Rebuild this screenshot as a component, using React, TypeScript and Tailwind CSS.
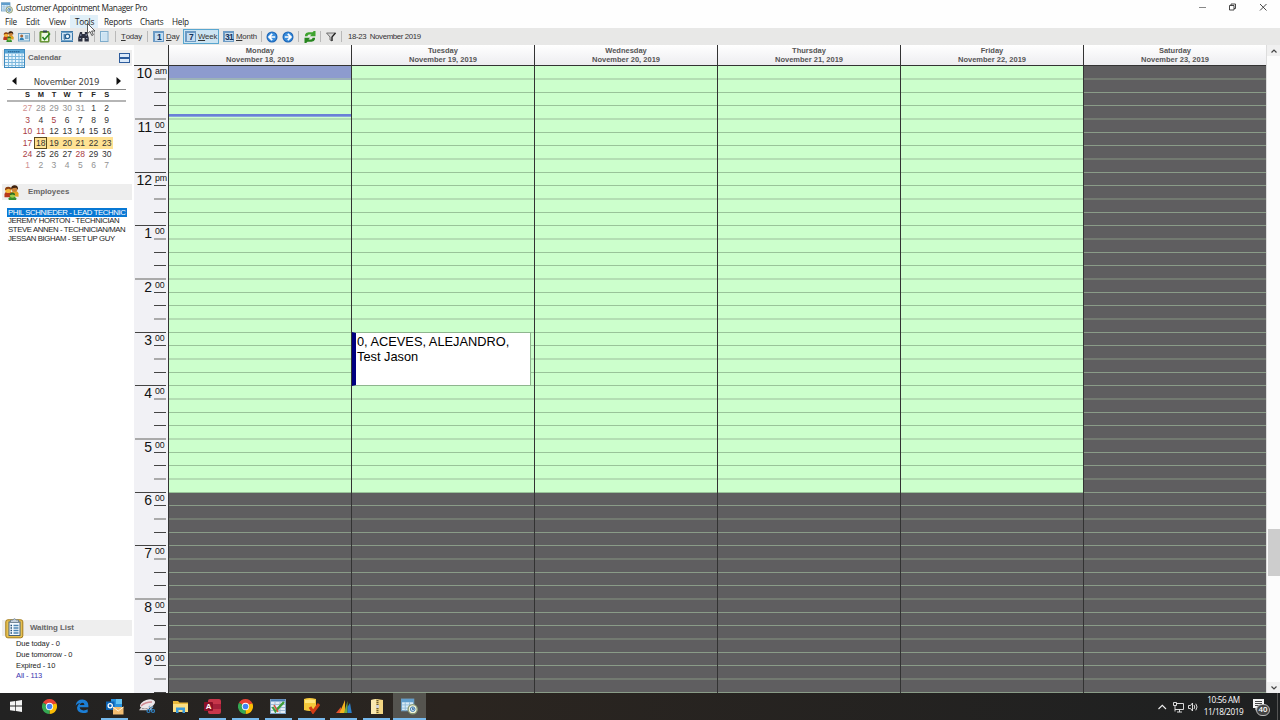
import type { ReactNode } from "react";
import clsx from "clsx";

const DAYS = [
  { name: "Monday", date: "November 18, 2019" },
  { name: "Tuesday", date: "November 19, 2019" },
  { name: "Wednesday", date: "November 20, 2019" },
  { name: "Thursday", date: "November 21, 2019" },
  { name: "Friday", date: "November 22, 2019" },
  { name: "Saturday", date: "November 23, 2019" },
];

const HOURS = [
  ["10", "am"], ["11", "00"], ["12", "pm"], ["1", "00"], ["2", "00"], ["3", "00"],
  ["4", "00"], ["5", "00"], ["6", "00"], ["7", "00"], ["8", "00"], ["9", "00"],
];

// 15 minute slots, 10 am to 9:45 pm
const SLOTS = Array.from({ length: 47 }, (_, i) => i);
const CLOSING_SLOT = 32;

const WEEKS = [
  [27, 28, 29, 30, 31, 1, 2],
  [3, 4, 5, 6, 7, 8, 9],
  [10, 11, 12, 13, 14, 15, 16],
  [17, 18, 19, 20, 21, 22, 23],
  [24, 25, 26, 27, 28, 29, 30],
  [1, 2, 3, 4, 5, 6, 7],
];

const EMPLOYEES = [
  "PHIL SCHNIEDER - LEAD TECHNIC",
  "JEREMY HORTON - TECHNICIAN",
  "STEVE ANNEN - TECHNICIAN/MAN",
  "JESSAN BIGHAM - SET UP GUY",
];

type CellProps = { className?: string; children?: ReactNode };

/* ---------- icons ---------- */

const AppIcon = ({ size = 12 }: { size?: number }) => (
  <svg width={size} height={size} viewBox="0 0 16 16">
    <rect x="0.5" y="1" width="11.500" height="11" fill="#d8ebf7" stroke="#6d9cc0" />
    <rect x="0.5" y="1" width="11.500" height="3" fill="#5f9dcc" />
    <path d="M1 6.500h10M1 9.500h10M4 4v8M8 4v8" stroke="#8ab6d6" strokeWidth="0.800" />
    <circle cx="11" cy="10.500" r="4.300" fill="#f5f6dc" stroke="#8b9a76" strokeWidth="1.300" />
    <circle cx="11" cy="10.500" r="2.200" fill="#d2e5f3" stroke="#3a79ae" strokeWidth="0.900" />
    <path d="M11 9v2l1.500-1" stroke="#1f568c" strokeWidth="0.900" fill="none" />
  </svg>
);

const PeopleIcon = ({ size = 12 }: { size?: number }) => (
  <svg width={size} height={size} viewBox="0 0 16 16">
    <path d="M7.500 12V8q1-2 4-2t4 3v3.500z" fill="#e0a223" />
    <circle cx="11.200" cy="4" r="3.300" fill="#c98238" />
    <path d="M7.500 4.500Q7.500 0.300 11.300 0.300T15 5l-2-2-3 .3z" fill="#3c2110" />
    <path d="M0.500 13V10q.5-3 4-3t4.500 3v3z" fill="#b8381b" />
    <circle cx="4.500" cy="5.300" r="3.300" fill="#f3b63a" />
    <path d="M1 5.500Q1 1.800 4.500 1.800T8 5L4.500 4z" fill="#8b3d12" />
    <path d="M5 16v-2q1-2 4-2t4 2v2z" fill="#37902e" />
    <circle cx="9" cy="11" r="2.700" fill="#9ccf4a" />
    <path d="M6.200 11q0-3 2.800-3t2.800 3L9 10z" fill="#2d6b22" />
  </svg>
);

const ContactIcon = () => (
  <svg width="12" height="10" viewBox="0 0 12 10">
    <rect x="0.500" y="1.500" width="11" height="7.500" fill="#d5e9f5" stroke="#6fa2c4" />
    <circle cx="3.700" cy="4" r="1.500" fill="#a9683c" />
    <path d="M1.500 8q0-2.500 2.200-2.500T6 8z" fill="#2f7fb5" />
    <path d="M7 4h3.500M7 6h3.500" stroke="#3e7ea8" />
  </svg>
);

const TaskIcon = () => (
  <svg width="12" height="13" viewBox="0 0 12 13">
    <rect x="1" y="1.500" width="9" height="10.500" rx="0.500" fill="#7fae3e" stroke="#55822c" />
    <rect x="2.500" y="3" width="6.500" height="8" fill="#eef7e4" />
    <rect x="4" y="0.500" width="4" height="2" fill="#345" />
    <path d="M3.500 7l2 2.500L11 3.500" stroke="#23811c" strokeWidth="1.600" fill="none" />
  </svg>
);

const LookupIcon = () => (
  <svg width="12" height="11" viewBox="0 0 12 11">
    <rect x="0.500" y="0.500" width="11" height="10" fill="#cfe3f3" stroke="#3d79ab" />
    <path d="M0 1.500h12M0 9.500h12" stroke="#6ea3ca" />
    <circle cx="6.500" cy="5.300" r="2.200" fill="#eff8ff" stroke="#245f92" strokeWidth="1.200" />
    <path d="M3.200 3v5M5 7l-1.500 1.700" stroke="#245f92" />
  </svg>
);

const BinocularsIcon = () => (
  <svg width="11" height="11" viewBox="0 0 11 11">
    <path d="M2 1h2.200v2h2.600V1H9l1.800 6v3.500H6.500V7h-2v3.500H0.200V7z" fill="#2c3040" />
    <path d="M1.500 7.500h1.500M8 7.500h1.500M2.800 3v2M8.200 3v2" stroke="#8793ab" />
  </svg>
);

const ListIcon = () => (
  <svg width="9" height="11" viewBox="0 0 9 11">
    <rect x="0.500" y="0.500" width="7.500" height="10" fill="#d7eaf7" stroke="#7eaccb" />
    <path d="M2 3h5M2 5h5M2 7h5M2 9h5" stroke="#bcd9eb" strokeWidth="0.800" />
  </svg>
);

const DayIcon = ({ label }: { label: string }) => (
  <span className="flex h-[11px] w-[11px] shrink-0 items-center justify-center border-t-2 border-r border-b border-l-2 border-[#6c9bc5] bg-[#c5dcf0] text-[8.500px] leading-none font-bold tracking-[-0.6px] text-[#12325c]">
    {label}
  </span>
);

const ArrowIcon = ({ flip = false }: { flip?: boolean }) => (
  <svg width="12" height="12" viewBox="0 0 12 12" className={clsx(flip && "rotate-180")}>
    <circle cx="6" cy="6" r="5.500" fill="#1c66b8" />
    <circle cx="6" cy="6" r="4.400" fill="#3c8fdd" />
    <path d="M9.200 6H3.500M6.200 2.800L3 6l3.200 3.200" stroke="#fff" strokeWidth="1.700" fill="none" />
  </svg>
);

const RefreshIcon = () => (
  <svg width="12" height="12" viewBox="0 0 12 12">
    <path d="M1 5.300V3.800Q1.500 1.500 4.500 1.200H8.500L9.800 0H11.500V5.300H6L7.500 3.600H5Q3.700 3.700 3.400 5.300z" fill="#3ea32f" />
    <path d="M11 6.700V8.200Q10.500 10.500 7.500 10.800H3.500L2.200 12H0.500V6.700H6L4.500 8.400H7Q8.300 8.300 8.600 6.700z" fill="#27861f" />
  </svg>
);

const FilterIcon = () => (
  <svg width="10" height="10" viewBox="0 0 10 10">
    <path d="M0.500 1h9L6 5v4L4 8V5z" fill="#d4d4d4" stroke="#555" strokeWidth="0.800" />
    <path d="M9.500 1L6 5v4" stroke="#222" strokeWidth="1.200" fill="none" />
  </svg>
);

const CalendarIcon = () => (
  <svg width="21" height="19" viewBox="0 0 21 19">
    <rect x="0.500" y="0.500" width="20" height="18" fill="#e8f5fd" stroke="#3e8bc0" />
    <rect x="1" y="1" width="19" height="3.500" fill="#57a5d6" />
    <path d="M4 2.800h12" stroke="#1e5686" strokeDasharray="1.500 0.500" />
    <path d="M1 7.500h19M1 10.500h19M1 13.500h19M1 16.500h19M4.500 5v13M8 5v13M11.500 5v13M15 5v13M18 5v13" stroke="#7db8dd" />
  </svg>
);

const ClipboardIcon = () => (
  <svg width="19" height="21" viewBox="0 0 19 21">
    <rect x="0.800" y="1.800" width="17" height="18" rx="2" fill="#e6c050" stroke="#a37916" />
    <rect x="4" y="4" width="11" height="13.500" fill="#f4faff" stroke="#48627b" />
    <path d="M5.500 4.500V2h2Q9.500-.5 11.500 2h2v2.500z" fill="#c3cfdb" stroke="#66788a" strokeWidth="0.800" />
    <path d="M5.500 7.500h1.500M5.500 10h1.500M5.500 12.500h1.500M5.500 15h1.500" stroke="#1f4d78" strokeWidth="1.300" />
    <path d="M8.500 7.500h5M8.500 10h5M8.500 12.500h5M8.500 15h5" stroke="#4b84b2" strokeWidth="1.300" />
  </svg>
);

const ChromeIcon = () => (
  <svg width="15" height="15" viewBox="0 0 16 16">
    <path d="M8 8L1.070 4A8 8 0 0 1 14.930 4z" fill="#e94335" />
    <path d="M8 8L14.930 4A8 8 0 0 1 8 16z" fill="#fbbd05" />
    <path d="M8 8V16A8 8 0 0 1 1.070 4z" fill="#35a853" />
    <path d="M8 4h6.900l.5 1H8z" fill="#e94335" />
    <circle cx="8" cy="8" r="3.900" fill="#fff" />
    <circle cx="8" cy="8" r="3" fill="#4285f4" />
  </svg>
);

const EdgeIcon = () => (
  <svg width="14" height="14" viewBox="0 0 16 16">
    <path
      d="M0.700 7.300Q2 0.500 8.500 0.500Q15 0.800 15.300 7.500V9.500H5.300Q5.800 13 9.800 13Q12.500 13 14.500 11.800V15Q12 16 9 16Q2.500 15.800 2.300 10Q2.400 6.500 6 4.500Q3 4.700 0.700 7.300zM5.500 6.800H10.800Q10.700 4.300 8.300 4.200Q5.800 4.500 5.500 6.800z"
      fill="#1c7fd6"
      fillRule="evenodd"
    />
  </svg>
);

const WindowsIcon = () => (
  <svg width="12" height="12" viewBox="0 0 12 12">
    <path d="M0 1.700L5.300 1v4.600H0zM6 0.900L12 0v5.600H6zM0 6.400h5.300V11L0 10.300zM6 6.400h6V12L6 11.100z" fill="#f3f3f3" />
  </svg>
);

const OutlookIcon = () => (
  <svg width="18" height="17" viewBox="0 0 18 17">
    <path d="M5 1h11v10H5z" fill="#2891dc" />
    <path d="M10 1h6v5h-6z" fill="#62c3f4" />
    <rect x="0" y="3.500" width="8.500" height="8.500" fill="#0c63b4" />
    <circle cx="4.200" cy="7.700" r="2.100" fill="none" stroke="#fff" strokeWidth="1.300" />
    <rect x="7" y="9" width="10.500" height="7.500" fill="#f3bd72" />
    <path d="M7 9l5.200 4L17.500 9" stroke="#fff3d9" fill="none" />
  </svg>
);

const SnipIcon = () => (
  <svg width="17" height="15" viewBox="0 0 17 15">
    <ellipse cx="8.500" cy="5" rx="7.800" ry="4.200" transform="rotate(-18 8.500 5)" fill="#ebe6ea" />
    <path d="M2 7Q6 3 13 3" stroke="#cf8b93" strokeWidth="1.300" fill="none" />
    <path d="M3 8.500L1.500 10.500h7l3-4.500" stroke="#d9d4d8" strokeWidth="1.500" fill="none" />
    <path d="M10 7l3 5M14 7.500l-4 4" stroke="#7fb2db" strokeWidth="1.100" />
    <circle cx="9.500" cy="12" r="1.500" fill="none" stroke="#3183c5" strokeWidth="1.200" />
    <circle cx="14" cy="12" r="1.500" fill="none" stroke="#3183c5" strokeWidth="1.200" />
  </svg>
);

const ExplorerIcon = () => (
  <svg width="15" height="13" viewBox="0 0 15 13">
    <path d="M0 1h5l1.500 1.500H15V12H0z" fill="#e9b93d" />
    <path d="M0 4h15v8H0z" fill="#fbdf84" />
    <path d="M3 13V7.500h9V13h-2.500V10h-4v3z" fill="#3b9bdc" />
  </svg>
);

const AccessIcon = () => (
  <svg width="17" height="15" viewBox="0 0 17 15">
    <rect x="4" y="0" width="13" height="15" rx="2" fill="#c7364a" />
    <path d="M4 5h13v5H4z" fill="#a5203a" />
    <rect x="0" y="3" width="9" height="9" rx="1" fill="#8b1128" />
    <text x="1.800" y="10.300" fontSize="8" fontWeight="bold" fill="#fff" fontFamily="Liberation Sans">A</text>
  </svg>
);

const PlannerIcon = () => (
  <svg width="16" height="15" viewBox="0 0 16 15">
    <rect x="0.500" y="0.500" width="15" height="14" fill="#e4edf7" stroke="#7fa2c4" />
    <path d="M1 1.500h14" stroke="#4b7fb8" strokeWidth="2" />
    <path d="M1 5.500h14M1 8.500h14M1 11.500h14M5 3v11M10 3v11" stroke="#9fbbd6" />
    <path d="M2.500 8l3 4.500L8 9" stroke="#3d9d38" strokeWidth="2" fill="none" />
    <path d="M7 10.500L14 3" stroke="#3d9d38" strokeWidth="2.500" />
    <path d="M4 6l4 7" stroke="#db5235" strokeWidth="1.500" />
  </svg>
);

const NoteIcon = () => (
  <svg width="17" height="16" viewBox="0 0 17 16">
    <path d="M1 1q5-2 12 0v11q-6 2-12 0z" fill="#f4c93b" />
    <path d="M2 2q5-1 10 0v3H2z" fill="#ffe67c" />
    <path d="M7 9l3 5L16 6" stroke="#d13b14" strokeWidth="3" fill="none" />
  </svg>
);

const ChartIcon = () => (
  <svg width="16" height="15" viewBox="0 0 16 15">
    <path d="M0 14L5 8v6z" fill="#e3502c" />
    <path d="M3.500 14L9 1v13z" fill="#f3b41d" />
    <path d="M8 14l3.500-12v12z" fill="#6cab3f" />
    <path d="M11.500 14V8L14 4l1.800 10z" fill="#2c7fc8" />
  </svg>
);

const ZipIcon = () => (
  <svg width="12" height="15" viewBox="0 0 12 15">
    <path d="M0 1l6-1 6 1v14H0z" fill="#f3d682" />
    <path d="M0 1l5-1v15H0z" fill="#fbe9b0" />
    <path d="M6.500 1v13" stroke="#6b5a33" strokeWidth="2" strokeDasharray="1.200 0.800" />
    <rect x="5" y="6" width="3" height="3" fill="#d5d5d5" />
  </svg>
);

/* ---------- title, menu and tool bars ---------- */

const TitleBar = () => (
  <header className="flex h-[15px] items-center pl-[1px] font-['Open_Sans',sans-serif] text-[#222]">
    <AppIcon />
    <span className="ml-[3px] flex-1 pt-[2px] text-[8.300px] leading-none tracking-[-0.370px] whitespace-nowrap">
      Customer Appointment Manager Pro
    </span>
    <svg width="70" height="10" viewBox="0 0 70 10" className="mr-[11px] mb-[1px]" fill="none" stroke="#333">
      <path d="M0 5.500h7" stroke="#888" />
      <path d="M30.500 3.500h4.500v4.500h-4.500zM32 3.500V2h4.500v4.500H35" strokeWidth="0.900" />
      <path d="M61 2l6.500 6.500M67.500 2L61 8.500" strokeWidth="0.900" />
    </svg>
  </header>
);

const MENU = [
  { label: "File", width: "w-[21px] pl-[5px]" },
  { label: "Edit", width: "w-[23px] pl-[5px]" },
  { label: "View", width: "w-[21px] pl-[5px]" },
  { label: "Tools", width: "ml-[5px] w-[28px] bg-[#e0eff8] pl-[5px]" },
  { label: "Reports", width: "ml-[1px] w-[36px] pl-[5px]" },
  { label: "Charts", width: "w-[32px] pl-[5px]" },
  { label: "Help", width: "w-[30px] pl-[5px]" },
];

const MenuBar = () => (
  <nav className="flex h-[13px] font-['Open_Sans',sans-serif] text-[8.200px] leading-[13px] tracking-[-0.250px] text-[#222]">
    {MENU.map(({ label, width }) => (
      <span key={label} className={clsx("whitespace-nowrap", width)}>{label}</span>
    ))}
  </nav>
);

const Cell = ({ className, children }: CellProps) => (
  <span className={clsx("flex h-full shrink-0 items-center whitespace-nowrap", className)}>{children}</span>
);

const Sep = ({ className }: CellProps) => (
  <Cell className={className}>
    <i className="h-[11px] w-px bg-[#b9b9b9]" />
  </Cell>
);

const Toolbar = () => (
  <div className="flex h-[17px] items-center bg-[#e8e8e7] pl-[3px] text-[7.800px] leading-none tracking-[-0.150px] text-[#333]">
    <Cell className="w-[15px]"><PeopleIcon size={11} /></Cell>
    <Cell className="w-[16px]"><ContactIcon /></Cell>
    <Sep className="w-[5px]" />
    <Cell className="w-[16px]"><TaskIcon /></Cell>
    <Sep className="w-[6px]" />
    <Cell className="w-[17px]"><LookupIcon /></Cell>
    <Cell className="w-[16px]"><BinocularsIcon /></Cell>
    <Sep className="w-[6px]" />
    <Cell className="w-[15px]"><ListIcon /></Cell>
    <Sep className="w-[6px]" />
    <Cell className="w-[26px]"><u>T</u>oday</Cell>
    <Sep className="w-[6px]" />
    <Cell className="w-[13px]"><DayIcon label="1" /></Cell>
    <Cell className="w-[17px]"><u>D</u>ay</Cell>
    <span className="flex h-[15px] w-[36px] shrink-0 items-center gap-[2px] border border-[#59a6cf] bg-[#cce4f2] pl-[1px]">
      <DayIcon label="7" />
      <span><u>W</u>eek</span>
    </span>
    <Cell className="ml-[4px] w-[13px]"><DayIcon label="31" /></Cell>
    <Cell className="w-[25px]"><u>M</u>onth</Cell>
    <Sep className="w-[5px]" />
    <Cell className="w-[16px]"><ArrowIcon /></Cell>
    <Cell className="w-[16px]"><ArrowIcon flip /></Cell>
    <Sep className="w-[6px]" />
    <Cell className="w-[16px]"><RefreshIcon /></Cell>
    <Sep className="w-[6px]" />
    <Cell className="w-[15px]"><FilterIcon /></Cell>
    <Sep className="w-[7px]" />
    <Cell className="tracking-[-0.350px] whitespace-pre">18-23  November 2019</Cell>
  </div>
);

/* ---------- sidebar ---------- */

const PanelHeader = ({ icon, title, className, children }: { icon: ReactNode; title: string; className: string; children?: ReactNode }) => (
  <div className="ml-[2px] flex h-[16px] w-[130px] items-center bg-[#eeeeee] text-[7.900px] leading-none font-bold tracking-[-0.050px] text-[#666]">
    <span className={clsx("flex shrink-0", className)}>{icon}</span>
    <span className="flex-1">{title}</span>
    {children}
  </div>
);

const dayColor = (day: number, row: number, col: number) => {
  const outside = (row === 0 && day > 20) || row === 5;
  if (outside) return col === 0 ? "text-[#d09090]" : "text-[#929292]";
  if (col === 0 || (row === 1 && day === 5) || day === 11 || day === 28) return "text-[#a83c44]";
  return "text-[#333]";
};

const MiniCalendar = () => (
  <div className="ml-[7px] flex w-[119px] flex-col pt-[8px]">
    <div className="flex h-[16px] items-center justify-between border-b border-[#888] pr-[5px] pb-[1px] pl-[5px]">
      <svg width="5" height="8" viewBox="0 0 5 8"><path d="M4.500 0v8L0 4z" fill="#111" /></svg>
      <span className="pt-[2px] font-['DejaVu_Sans',sans-serif] text-[8.600px] leading-none tracking-[-0.300px] text-[#444]">November 2019</span>
      <svg width="5" height="8" viewBox="0 0 5 8"><path d="M0.500 0v8L5 4z" fill="#111" /></svg>
    </div>
    <div className="flex h-[12px] items-center border-b-2 border-[#b5b5b5] pl-[14px] text-[7.500px] leading-none font-bold text-[#222]">
      {["S", "M", "T", "W", "T", "F", "S"].map((d, i) => (
        <span key={i} className="w-[13.200px] text-center">{d}</span>
      ))}
    </div>
    <div className="pt-[1px] pl-[14px] text-[8.500px] leading-none">
      {WEEKS.map((week, row) => (
        <div key={row} className="flex h-[11.400px]">
          {week.map((day, col) => (
            <span
              key={col}
              className={clsx(
                "flex w-[13.200px] items-center justify-center",
                dayColor(day, row, col),
                row === 3 && col > 0 && "bg-[#ffe293]",
                day === 18 && "border border-[#5c4a1e]"
              )}
            >
              {day}
            </span>
          ))}
        </div>
      ))}
    </div>
  </div>
);

const Sidebar = () => (
  <aside className="flex w-[134px] shrink-0 flex-col bg-white pt-[5px]">
    <PanelHeader icon={<CalendarIcon />} title="Calendar" className="mr-[3px] ml-[2px]">
      <span className="mr-[2px] flex h-[10px] w-[11px] flex-col justify-between border border-[#2d5c9c] bg-[#2d5c9c]">
        <i className="h-[3px] bg-[#dbeafa]" />
        <i className="h-[3px] bg-[#dbeafa]" />
      </span>
    </PanelHeader>
    <MiniCalendar />
    <div className="mt-[12.600px]">
      <PanelHeader icon={<PeopleIcon size={15} />} title="Employees" className="mt-[2px] mr-[9px] ml-[2px]" />
    </div>
    <div className="mt-[8px] ml-[7px] w-[120px] text-[7.800px] leading-[8.700px] tracking-[-0.400px] text-[#222]">
      {EMPLOYEES.map((name, i) => (
        <div
          key={name}
          className={clsx("h-[8.700px] pl-[1px] whitespace-nowrap", i === 0 && "bg-[#0878d4] text-white")}
        >
          <span className="relative top-[0.600px]">{name}</span>
        </div>
      ))}
    </div>
    <div className="mt-auto mb-[11px]">
      <PanelHeader icon={<ClipboardIcon />} title="Waiting List" className="mr-[6px] ml-[3px]" />
      <ul className="pt-[3px] pl-[16px] text-[7.500px] leading-[10.700px] tracking-[-0.100px] text-[#222]">
        <li>Due today - 0</li>
        <li>Due tomorrow - 0</li>
        <li>Expired - 10</li>
        <li className="text-[#3b35b0]">All - 113</li>
      </ul>
    </div>
  </aside>
);

/* ---------- week grid ---------- */

// every third slot is a pixel taller and ends in a softer, thicker rule
const slotSize = (slot: number) => (slot % 3 === 0 ? "h-[14px] border-b-2" : "h-[13px] border-b");

const slotColor = (slot: number, closed: boolean) => {
  if (closed) return slot % 3 === 0 ? "bg-[#5f5e60] border-[#737a71]" : "bg-[#5f5e60] border-[#8a9c88]";
  return slot % 3 === 0 ? "bg-[#ccffcc] border-[#b3deb3]" : "bg-[#ccffcc] border-[#99c399]";
};

const TimeGutter = () => (
  <div className="w-[34px] shrink-0 bg-[#f1f1f5]">
    <div className="h-[21px] border-b border-[#333] bg-[#f5f5f5]" />
    {SLOTS.map((slot) => {
      const hour = slot % 4 === 0 ? HOURS[slot / 4] : null;
      const rule = slot % 3 === 0 ? "h-[2px] bg-[#aaaaaa]" : "h-px bg-[#444]";
      return (
        <div key={slot} className={clsx("flex flex-col justify-between", slot % 3 === 0 ? "h-[14px]" : "h-[13px]")}>
          <div className="flex h-0 items-start justify-end text-[#111]">
            {hour && (
              <>
                <span className="text-[14px] leading-[14px]">{hour[0]}</span>
                <span className="ml-[3px] w-[13px] text-[8.800px] leading-[10px] tracking-[-0.100px]">{hour[1]}</span>
              </>
            )}
          </div>
          <div className={clsx("mr-[2px] self-end", slot % 4 === 3 ? "w-[31px]" : "w-[12px]", rule)} />
        </div>
      );
    })}
  </div>
);

const Appointment = () => (
  <div className="absolute top-[266px] left-0 h-[54px] w-[179px] border border-l-4 border-[#8fb58f] border-l-[#000080] bg-white pl-[1px] text-[12.800px] leading-[15px] text-black">
    <p className="pt-[1px] whitespace-nowrap">0, ACEVES, ALEJANDRO,</p>
    <p>Test Jason</p>
  </div>
);

const DayColumn = ({ index }: { index: number }) => {
  const { name, date } = DAYS[index];
  return (
    <section className="flex w-[183px] flex-col border-l border-[#333]">
      <div className="h-[21px] border-b border-[#333] bg-gradient-to-b from-white to-[#ededf0] pt-[1px] text-center text-[7.500px] leading-[9px] font-bold text-[#555]">
        <p>{name}</p>
        <p>{date}</p>
      </div>
      <div className="relative">
        {SLOTS.map((slot) => (
          <div
            key={slot}
            className={clsx(
              slotSize(slot),
              index === 0 && slot === 0 ? "border-[#9cb3b8] bg-[#8d9bce]" : slotColor(slot, index === 5 || slot >= CLOSING_SLOT)
            )}
          />
        ))}
        {index === 0 && <div className="absolute top-[48px] left-0 h-[3px] w-full border-b border-[#8aa4dc] bg-[#6a80d6]" />}
        {index === 1 && <Appointment />}
      </div>
    </section>
  );
};

const ScrollBar = () => (
  <div className="flex flex-1 flex-col items-center border-l border-[#ddd] bg-[#fcfcfc]">
    <span className="flex h-[11px] w-full items-center justify-center bg-[#f0f0f0]">
      <svg width="6" height="4" viewBox="0 0 6 4"><path d="M0.500 3.500L3 1l2.500 2.500" stroke="#444" strokeWidth="1.200" fill="none" /></svg>
    </span>
    <span className="mt-[473px] h-[47px] w-[12px] bg-[#cdcdcd]" />
    <span className="mt-auto flex h-[11px] w-full items-center justify-center bg-[#f0f0f0]">
      <svg width="6" height="4" viewBox="0 0 6 4"><path d="M0.500 0.500L3 3l2.500-2.500" stroke="#444" strokeWidth="1.200" fill="none" /></svg>
    </span>
  </div>
);

/* ---------- windows task bar ---------- */

const TASKS = [
  { icon: <WindowsIcon />, open: false },
  { icon: <ChromeIcon />, open: false },
  { icon: <EdgeIcon />, open: false },
  { icon: <OutlookIcon />, open: true },
  { icon: <SnipIcon />, open: false },
  { icon: <ExplorerIcon />, open: false },
  { icon: <AccessIcon />, open: true },
  { icon: <ChromeIcon />, open: true },
  { icon: <PlannerIcon />, open: true },
  { icon: <NoteIcon />, open: true },
  { icon: <ChartIcon />, open: true },
  { icon: <ZipIcon />, open: true },
  { icon: <AppIcon size={17} />, open: true },
];

const TaskBar = () => (
  <footer className="flex h-[27px] items-stretch bg-gradient-to-r from-[#222222] via-[#2b2520] via-35% to-[#1e2021] text-white">
    {TASKS.map(({ icon, open }, i) => (
      <div
        key={i}
        className={clsx(
          "flex w-[32.750px] flex-col items-center justify-end",
          i === 12 && "bg-[#55544f]"
        )}
      >
        <span className="flex flex-1 items-center pt-[1px]">{icon}</span>
        <i className={clsx("h-[2px]", i === 12 ? "w-full" : "w-[27px]", open ? "bg-[#76b9ed]" : "bg-transparent")} />
      </div>
    ))}
    <div className="ml-auto flex items-center font-['Open_Sans',sans-serif]">
      <svg width="40" height="12" viewBox="0 0 40 12" fill="none" stroke="#eee">
        <path d="M0.500 8L4.300 4.300L8 8" strokeWidth="1.100" />
        <path d="M18 2.500h7.500v6H17M19 11h5M21.500 8.500V11M15.500 1.500h3v3h-3zM17 4.500v6" strokeWidth="0.900" />
        <path d="M30.500 4.500h2l2-2.500v8l-2-2.500h-2zM36 4q1.500 2 0 4M37.800 2.700q2.500 3.300 0 6.600" strokeWidth="0.900" />
      </svg>
      <div className="mb-[2px] ml-[5px] w-[41px] text-center text-[8.200px] leading-[12px] tracking-[-0.400px] whitespace-nowrap">
        <p>10:56 AM</p>
        <p>11/18/2019</p>
      </div>
      <div className="relative ml-[9px] h-[16px] w-[24px]">
        <svg width="12" height="12" viewBox="0 0 12 12">
          <path d="M0 0h11v9H5l-2.500 2.500V9H0z" fill="#f5f5f5" />
          <path d="M2 2.500h7M2 4.500h7M2 6.500h5" stroke="#333" strokeWidth="0.900" />
        </svg>
        <span className="absolute top-[5px] left-[3px] flex h-[12px] w-[14px] items-center justify-center rounded-full border border-[#bbb] bg-[#444] text-[7.800px] leading-none font-semibold">40</span>
      </div>
      <i className="h-full w-px bg-[#555]" />
      <i className="w-[2px]" />
    </div>
  </footer>
);

export default function App() {
  return (
    <div className="relative flex h-[720px] w-[1280px] flex-col overflow-hidden bg-[#fefefe] font-['Liberation_Sans',Arial,sans-serif]">
      <TitleBar />
      <MenuBar />
      <Toolbar />
      <main className="flex h-[648px]">
        <Sidebar />
        <TimeGutter />
        <div className="flex">
          {DAYS.map((day, i) => (
            <DayColumn key={day.name} index={i} />
          ))}
        </div>
        <ScrollBar />
      </main>
      <TaskBar />
      {/* mouse pointer over the Tools menu */}
      <svg className="absolute top-[23px] left-[87px]" width="9" height="14" viewBox="0 0 9 14">
        <path d="M0.500 0.500v10l2.500-2 1.800 4 1.500-.7-1.700-3.800H8z" fill="#fff" stroke="#333" strokeWidth="0.800" />
      </svg>
    </div>
  );
}
